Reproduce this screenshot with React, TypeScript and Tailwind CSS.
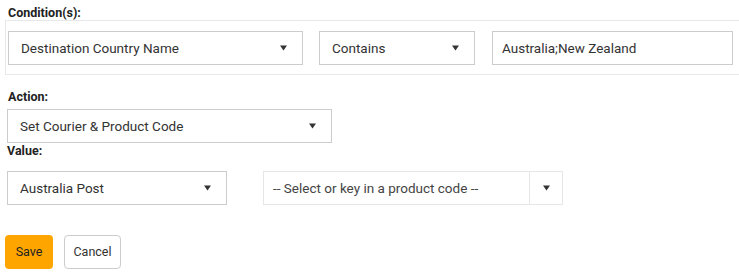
import { useState } from 'react'

const FONT = "font-['Roboto',_'Liberation_Sans',_sans-serif]"

function Caret() {
  return (
    <svg width="7" height="6" viewBox="0 0 7 6" className="shrink-0">
      <path d="M0 0.5 H7 L3.5 5.5 Z" fill="#333" />
    </svg>
  )
}

function SelectBox({ value, className }: { value: string; className: string }) {
  return (
    <div
      className={`flex h-[34px] items-center justify-between border border-[#cccccc] bg-white pr-[15px] pl-[12px] ${className}`}
    >
      <span className="text-[13.5px] text-[#333]">{value}</span>
      <Caret />
    </div>
  )
}

function Label({ children, className }: { children: string; className: string }) {
  return <div className={`text-[12.5px] leading-[14px] font-bold text-[#222] ${className}`}>{children}</div>
}

export default function App() {
  const [text, setText] = useState('Australia;New Zealand')

  return (
    <div className={`${FONT} w-[739px] overflow-hidden bg-white pl-[5px]`}>
      <Label className="pt-[6px] pl-[3px]">Condition(s):</Label>
      <div className="mr-[-20px] flex gap-[16px] border-y border-l border-[#e6e8ec] pt-[10px] pb-[9px] pl-[2px]">
        <SelectBox value="Destination Country Name" className="w-[295px]" />
        <SelectBox value="Contains" className="w-[156px]" />
        <input
          value={text}
          onChange={(e) => setText(e.target.value)}
          className="ml-[1px] h-[34px] w-[241px] border border-[#cccccc] px-[9px] text-[13.5px] text-[#333] outline-none"
        />
      </div>

      <Label className="pt-[15px] pb-[5px] pl-[3px]">Action:</Label>
      <SelectBox value="Set Courier & Product Code" className="ml-[2px] w-[325px]" />

      <Label className="pt-[1px] pb-[13px] pl-[2px]">Value:</Label>
      <div className="flex items-center gap-[36px] pl-[2px]">
        <SelectBox value="Australia Post" className="w-[220px]" />
        <div className="flex h-[34px] w-[300px] border border-[#e6e6e6] bg-white">
          <div className="flex flex-1 items-center pl-[9px] text-[13.5px] text-[#444]">
            -- Select or key in a product code --
          </div>
          <div className="flex w-[33px] items-center justify-center border-l border-[#e6e6e6]">
            <Caret />
          </div>
        </div>
      </div>

      <div className="flex gap-[11px] pt-[30px] pb-[7px]">
        <button className="h-[34px] w-[48px] rounded-[4px] bg-[#ffa500] text-[12.5px] text-[#222]">Save</button>
        <button className="h-[34px] w-[57px] rounded-[4px] border border-[#cccccc] bg-white text-[12.5px] text-[#333]">
          Cancel
        </button>
      </div>
    </div>
  )
}
